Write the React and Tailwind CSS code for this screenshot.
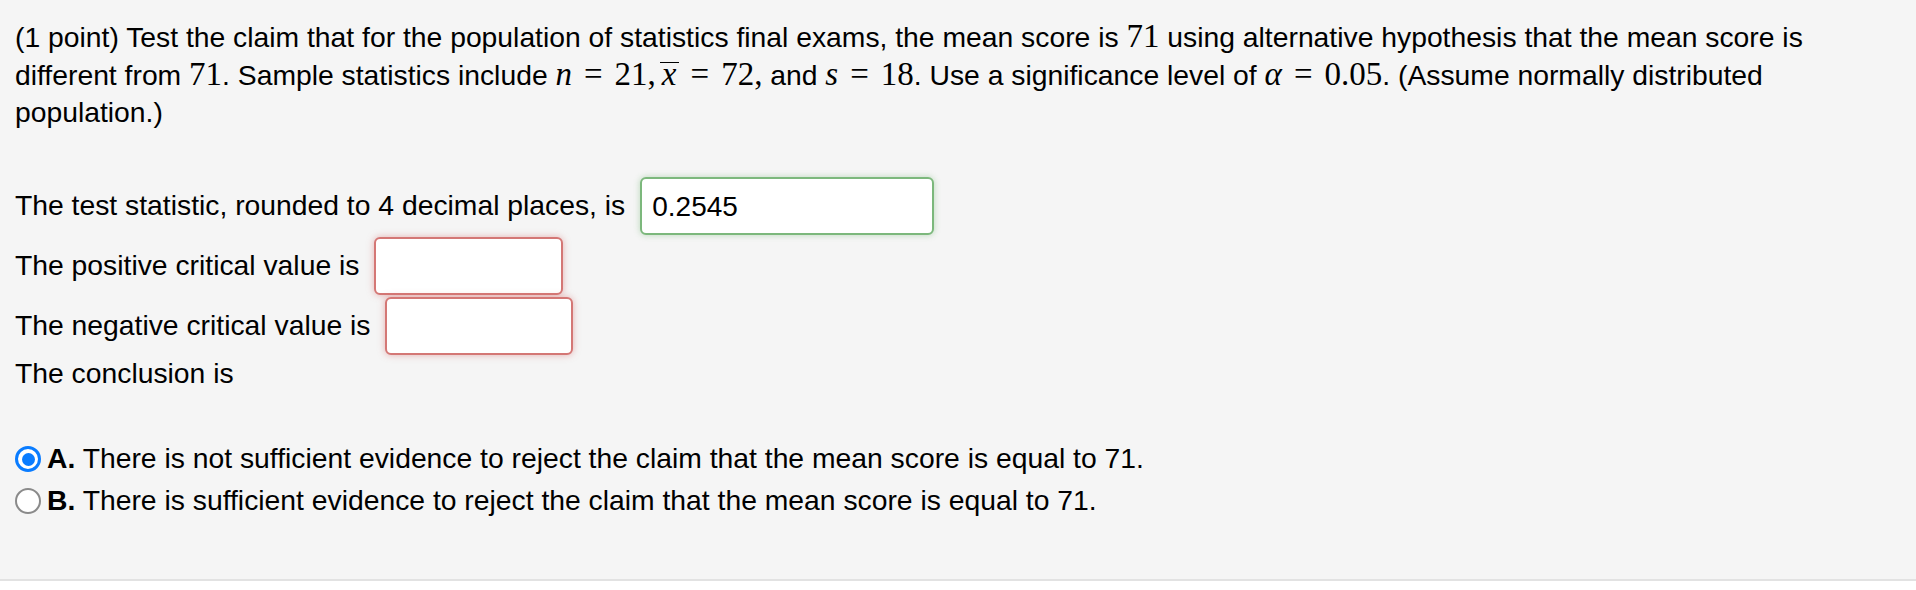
import React, { useState } from 'react';

// Serif math bits, rendered in a MathJax-like face
const M = ({ children, italic = false }) => (
  <span
    className={`font-['Liberation_Serif',serif] text-[33px] leading-none ${italic ? 'italic' : ''}`}
  >
    {children}
  </span>
);

const Eq = () => (
  <span className="mx-[12px] font-['Liberation_Serif',serif] text-[33px] leading-none">=</span>
);

const AnswerBox = ({ value = '', ok = false, width }) => {
  const tone = ok
    ? 'border-[#7cb87c] shadow-[0_0_6px_rgba(110,180,110,0.45)]'
    : 'border-[#d47775] shadow-[0_0_7px_rgba(214,110,110,0.5)]';
  return (
    <input
      readOnly
      value={value}
      className={`h-[58px] ${width} rounded-[6px] border-2 bg-white px-[10px] pt-[2px] text-[28px] text-black outline-none ${tone}`}
    />
  );
};

const Radio = ({ checked }) =>
  checked ? (
    <span className="flex h-[26px] w-[26px] shrink-0 items-center justify-center rounded-full border-[3px] border-[#0a7cff] bg-white">
      <span className="h-[13px] w-[13px] rounded-full bg-[#0a7cff]" />
    </span>
  ) : (
    <span className="h-[26px] w-[26px] shrink-0 rounded-full border-2 border-[#8a8a8a] bg-white" />
  );

export default function App() {
  const [choice, setChoice] = useState('A');

  return (
    <div className="min-h-[590px] bg-white font-['Liberation_Sans',Arial,sans-serif] text-black">
      <div className="h-[581px] border-b-2 border-[#e2e2e2] bg-[#f5f5f5] pl-[15px] pt-[19px] text-[28.3px] leading-[37.5px]">
        {/* problem statement */}
        <p>
          (1 point) Test the claim that for the population of statistics final exams, the mean score is{' '}
          <M>71</M> using alternative hypothesis that the mean score is
          <br />
          different from <M>71</M>. Sample statistics include <M italic>n</M>
          <Eq />
          <M>21,</M>
          <span className="ml-[4px] inline-block border-t-[1.5px] border-black px-[2px] font-['Liberation_Serif',serif] text-[33px] italic leading-[0.7]">
            x
          </span>
          <Eq />
          <M>72,</M> and <M italic>s</M>
          <Eq />
          <M>18</M>. Use a significance level of <M italic>α</M>
          <Eq />
          <M>0.05</M>. (Assume normally distributed
          <br />
          population.)
        </p>

        {/* answer rows */}
        <div className="mt-[45px] flex flex-col gap-[2px]">
          <div className="flex items-center gap-[15px]">
            <span>The test statistic, rounded to 4 decimal places, is</span>
            <AnswerBox value="0.2545" ok width="w-[294px]" />
          </div>
          <div className="flex items-center gap-[15px]">
            <span>The positive critical value is</span>
            <AnswerBox width="w-[189px]" />
          </div>
          <div className="flex items-center gap-[15px]">
            <span>The negative critical value is</span>
            <AnswerBox width="w-[188px]" />
          </div>
        </div>
        <p>The conclusion is</p>

        {/* choices */}
        <div className="mt-[46px] flex flex-col">
          {[
            ['A', 'There is not sufficient evidence to reject the claim that the mean score is equal to 71.'],
            ['B', 'There is sufficient evidence to reject the claim that the mean score is equal to 71.'],
          ].map(([k, text]) => (
            <label
              key={k}
              onClick={() => setChoice(k)}
              className="flex h-[42px] cursor-pointer items-center gap-[6px]"
            >
              <Radio checked={choice === k} />
              <span>
                <b>{k}.</b> {text}
              </span>
            </label>
          ))}
        </div>
      </div>
    </div>
  );
}
